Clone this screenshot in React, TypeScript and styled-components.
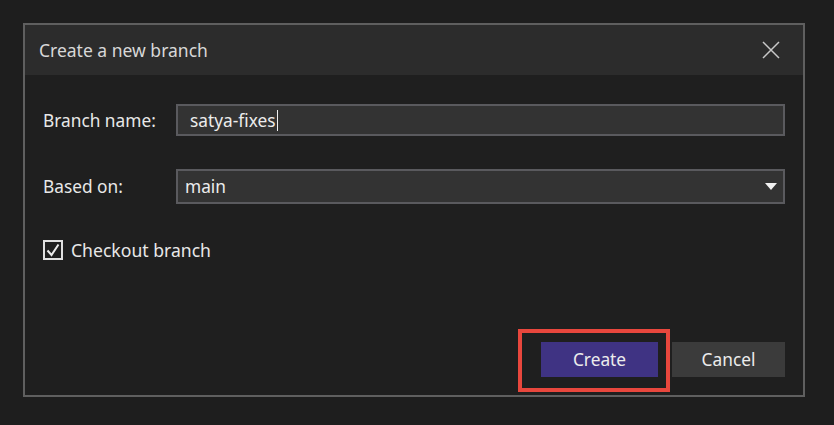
import * as React from 'react';
import styled, { createGlobalStyle } from 'styled-components';

const GlobalStyle = createGlobalStyle`
  html, body {
    margin: 0;
    padding: 0;
    background-color: #1e1e1e;
  }
  body {
    font-family: 'Noto Sans', 'Open Sans', 'Liberation Sans', sans-serif;
    color: #e6e6e6;
  }
`;

const Page = styled.div`
  width: 834px;
  height: 425px;
  padding: 23px 0 0 23px;
  box-sizing: border-box;
`;

const Dialog = styled.div`
  width: 782px;
  height: 374px;
  box-sizing: border-box;
  border: 2px solid #5f5f5f;
  background-color: #1f1f1f;
  display: flex;
  flex-direction: column;
`;

const TitleBar = styled.header`
  height: 50px;
  background-color: #2c2c2c;
  display: flex;
  align-items: center;
  justify-content: space-between;
  padding: 0 22px 0 14px;
`;

const Title = styled.span`
  font-size: 17.5px;
  color: #d8d8d8;
`;

const CloseButton = styled.button`
  width: 20px;
  height: 20px;
  padding: 0;
  border: none;
  background: transparent;
  display: flex;
  align-items: center;
  justify-content: center;
  cursor: pointer;
`;

const Body = styled.section`
  flex: 1;
  display: flex;
  flex-direction: column;
  padding: 29px 18px 18px 18px;
`;

const FormGrid = styled.div`
  display: grid;
  grid-template-columns: 133px 1fr;
  row-gap: 33px;
  align-items: center;
`;

const Label = styled.label`
  font-size: 17.3px;
  color: #e8e8e8;
`;

const TextField = styled.div`
  height: 32px;
  box-sizing: border-box;
  border: 2px solid #5a5a5e;
  background-color: #333333;
  display: flex;
  align-items: center;
  padding: 0 12px;
  font-size: 17.3px;
  color: #ececec;
`;

const Caret = styled.span`
  display: inline-block;
  width: 1px;
  height: 21px;
  background-color: #f0f0f0;
  margin-left: 1px;
`;

const Select = styled.div`
  height: 35px;
  box-sizing: border-box;
  border: 2px solid #5a5a5e;
  background-color: #333333;
  display: flex;
  align-items: center;
  justify-content: space-between;
  padding: 0 6px 0 7px;
  font-size: 17.3px;
  color: #ececec;
`;

const CheckRow = styled.div`
  display: flex;
  align-items: center;
  gap: 8px;
  margin-top: 34px;
  font-size: 17.6px;
  color: #e8e8e8;
`;

const CheckBox = styled.span`
  width: 20px;
  height: 20px;
  box-sizing: border-box;
  border: 2px solid #e0e0e0;
  display: flex;
  align-items: center;
  justify-content: center;
`;

const Footer = styled.footer`
  margin-top: auto;
  display: flex;
  justify-content: flex-end;
  gap: 14px;
`;

const ButtonSlot = styled.div`
  position: relative;
`;

const Highlight = styled.div`
  position: absolute;
  left: -23px;
  right: -12px;
  top: -13px;
  bottom: -15px;
  border: 4px solid #e8473d;
  pointer-events: none;
`;

const Button = styled.button<{ $primary?: boolean }>`
  width: ${(p) => (p.$primary ? '117px' : '113px')};
  height: 35px;
  border: none;
  padding: 0;
  font-family: inherit;
  font-size: 17.3px;
  color: #ececec;
  background-color: ${(p) => (p.$primary ? '#3f3383' : '#3b3b3b')};
  cursor: pointer;
`;

export default function App() {
  return (
    <>
      <GlobalStyle />
      <Page>
        <Dialog>
          <TitleBar>
            <Title>Create a new branch</Title>
            <CloseButton aria-label="Close">
              <svg width="18" height="18" viewBox="0 0 18 18">
                <path d="M1 1 L17 17 M17 1 L1 17" stroke="#c8c8c8" strokeWidth="1.5" />
              </svg>
            </CloseButton>
          </TitleBar>
          <Body>
            <FormGrid>
              <Label>Branch name:</Label>
              <TextField>
                satya-fixes
                <Caret />
              </TextField>
              <Label>Based on:</Label>
              <Select>
                <span>main</span>
                <svg width="12" height="7" viewBox="0 0 12 7">
                  <path d="M0 0 H12 L6 7 Z" fill="#f2f2f2" />
                </svg>
              </Select>
            </FormGrid>
            <CheckRow>
              <CheckBox>
                <svg width="14" height="14" viewBox="0 0 14 14">
                  <path d="M1.5 7.5 L5.5 12 L12.5 1.5" stroke="#ececec" strokeWidth="2" fill="none" />
                </svg>
              </CheckBox>
              Checkout branch
            </CheckRow>
            <Footer>
              <ButtonSlot>
                <Button $primary>Create</Button>
                <Highlight />
              </ButtonSlot>
              <Button>Cancel</Button>
            </Footer>
          </Body>
        </Dialog>
      </Page>
    </>
  );
}
